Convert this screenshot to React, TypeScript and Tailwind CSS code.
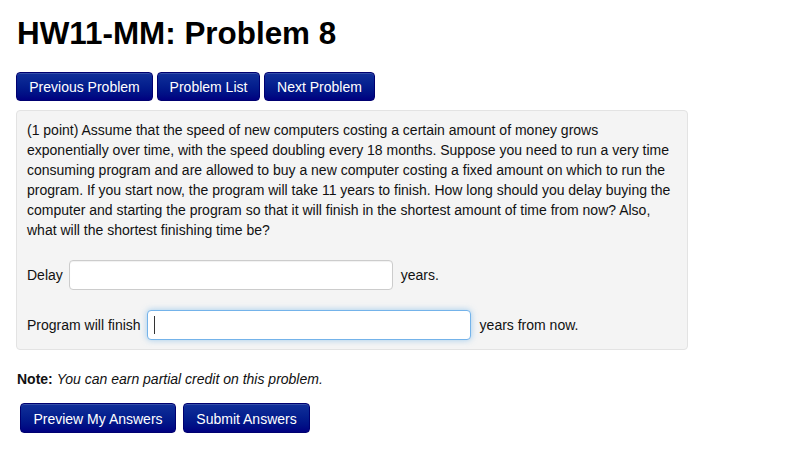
import React from "react";

const btn =
  "h-[29px] rounded-[4px] bg-gradient-to-b from-[#12309a] to-[#000080] text-white text-[14px] leading-[29px] border border-[#000070] shadow-[inset_0_1px_0_rgba(255,255,255,0.15)]";

export default function App() {
  return (
    <div
      className="min-h-[451px] bg-white pl-[16px] pr-[16px] pt-[15px] text-[#111]"
      style={{ fontFamily: '"Liberation Sans", Arial, sans-serif' }}
    >
      <h1 className="ml-[1px] text-[31.4px] font-bold leading-[38px] text-black">
        HW11-MM: Problem 8
      </h1>
      <div className="mt-[19px] flex gap-[4px]">
        <button className={`${btn} w-[137px]`}>Previous Problem</button>
        <button className={`${btn} w-[103px]`}>Problem List</button>
        <button className={`${btn} w-[111px]`}>Next Problem</button>
      </div>
      <div className="mt-[9px] w-[672px] rounded-[4px] border border-[#e3e3e3] bg-[#f4f4f4] px-[10px] pb-[9px] pt-[9px] text-[14px] leading-[20px]">
        <p>
          (1 point) Assume that the speed of new computers costing a certain amount of money grows
          exponentially over time, with the speed doubling every 18 months. Suppose you need to run a
          very time consuming program and are allowed to buy a new computer costing a fixed amount on
          which to run the program. If you start now, the program will take 11 years to finish. How
          long should you delay buying the computer and starting the program so that it will finish in
          the shortest amount of time from now? Also, what will the shortest finishing time be?
        </p>
        <div className="mt-[20px] flex items-center">
          <span>Delay</span>
          <input
            type="text"
            className="ml-[6px] h-[30px] w-[324px] rounded-[4px] border border-[#cccccc] bg-white px-[6px] outline-none shadow-[inset_0_1px_1px_rgba(0,0,0,0.06)]"
          />
          <span className="ml-[8px]">years.</span>
        </div>
        <div className="mt-[20px] flex items-center">
          <span>Program will finish</span>
          <div className="ml-[6px] flex h-[30px] w-[324px] items-center rounded-[4px] border border-[#74b3ea] bg-white px-[6px] shadow-[0_0_6px_rgba(102,175,233,0.6)]">
            <span className="h-[18px] w-[1px] bg-[#333]" />
          </div>
          <span className="ml-[9px]">years from now.</span>
        </div>
      </div>
      <p className="ml-[1px] mt-[19px] text-[14px] leading-[20px]">
        <span className="font-bold">Note:</span> <i>You can earn partial credit on this problem.</i>
      </p>
      <div className="ml-[4px] mt-[14px] flex gap-[7px]">
        <button className={`${btn} h-[30px] w-[156px] leading-[30px]`}>Preview My Answers</button>
        <button className={`${btn} h-[30px] w-[127px] leading-[30px]`}>Submit Answers</button>
      </div>
    </div>
  );
}
